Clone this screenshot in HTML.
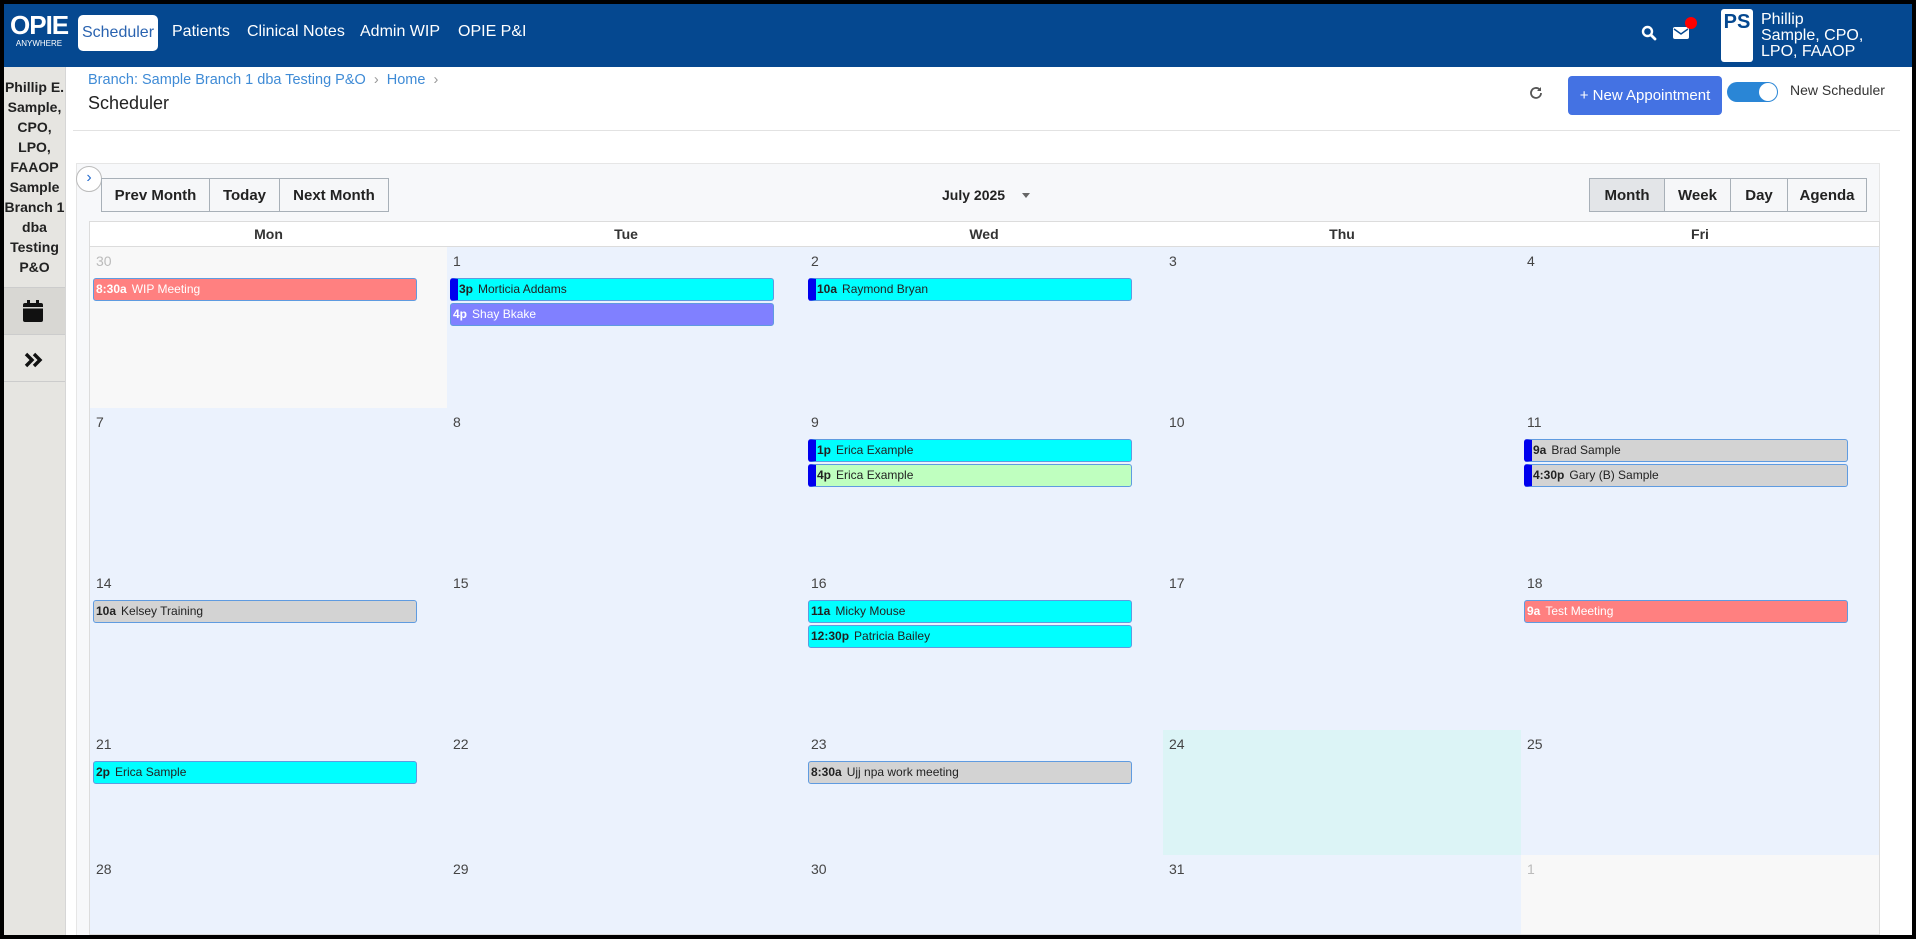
<!DOCTYPE html>
<html style="overflow:hidden;width:1916px;height:939px"><head><meta charset="utf-8"><style>
*{box-sizing:border-box;margin:0;padding:0}
body{width:1916px;height:939px;background:#000;font-family:"Liberation Sans",sans-serif;position:relative;overflow:hidden}
.a{position:absolute}
#nav{left:4px;top:4px;width:1908px;height:63px;background:#054890}
.nl{color:#fff;font-size:16px;top:19px}
#side{left:4px;top:67px;width:62px;height:868px;background:#e6e5e1;border-right:1px solid #d6d6d6}
#main{left:66px;top:67px;width:1846px;height:868px;background:#fff;overflow:hidden}
.btn{position:absolute;top:178px;height:34px;border:1px solid #a8b0b8;background:#f6f7f9;font-weight:bold;font-size:15px;color:#222;display:flex;align-items:center;justify-content:center}
.cell{position:absolute;border-right:1px solid #dcdcdc;border-bottom:1px solid #dcdcdc;background:#ebf2fd;overflow:hidden}
.dn{position:absolute;left:6px;top:6px;font-size:14px;color:#444}
.ev{position:absolute;left:3px;width:324px;height:23px;border:1px solid #5f9be0;border-radius:3px;font-size:12px;color:#222;line-height:21px;padding-left:2px;white-space:nowrap;overflow:hidden}
.ev b{margin-right:5px}
.bar{border-left:8px solid #0000ee;padding-left:1px}
.hd{position:absolute;top:222px;height:25px;text-align:center;font-weight:bold;font-size:14px;color:#333;line-height:25px;border-right:1px solid #dcdcdc;border-bottom:1px solid #dcdcdc;background:#fff}
</style></head><body>
<div id="nav" class="a">
 <div class="a" style="left:6px;top:6px;width:58px;text-align:center;color:#fff">
  <div style="font-size:26px;font-weight:bold;line-height:30px;letter-spacing:-1px">OPIE</div>
  <div style="font-size:8px;line-height:8px">ANYWHERE</div>
 </div>
 <div class="a" style="left:74px;top:11px;width:80px;height:36px;background:#fff;border-radius:5px;color:#2a63b0;font-size:16px;line-height:36px;text-align:center">Scheduler</div>
 <div class="a nl" style="left:168px">Patients</div>
 <div class="a nl" style="left:243px">Clinical Notes</div>
 <div class="a nl" style="left:356px">Admin WIP</div>
 <div class="a nl" style="left:454px">OPIE P&amp;I</div>
 <svg class="a" style="left:1637px;top:21px" width="16" height="16" viewBox="0 0 16 16"><circle cx="6.5" cy="6.5" r="4.5" stroke="#fff" stroke-width="2.4" fill="none"/><path d="M10 10l4 4" stroke="#fff" stroke-width="2.8" stroke-linecap="round"/></svg>
 <svg class="a" style="left:1669px;top:23px" width="16" height="12" viewBox="0 0 16 12"><rect width="16" height="12" rx="2" fill="#fff"/><path d="M1 2l7 5 7-5" stroke="#054890" stroke-width="1.5" fill="none"/></svg>
 <div class="a" style="left:1681px;top:13px;width:12px;height:12px;border-radius:50%;background:#f00"></div>
 <div class="a" style="left:1717px;top:5px;width:32px;height:53px;background:#fff;border-radius:3px;color:#054890;font-size:20px;font-weight:bold;text-align:center;line-height:26px">PS</div>
 <div class="a" style="left:1757px;top:8px;color:#fff;font-size:16px;line-height:16px">Phillip<br>Sample, CPO,<br>LPO, FAAOP</div>
</div>
<div id="side" class="a">
 <div style="padding-top:10px;text-align:center;font-weight:bold;font-size:14px;color:#222;line-height:20px">Phillip E.<br>Sample,<br>CPO,<br>LPO,<br>FAAOP<br>Sample<br>Branch 1<br>dba<br>Testing<br>P&amp;O</div>
 <div class="a" style="left:0;top:220px;width:61px;height:48px;background:#d8d7d3;border-top:1px solid #ccc;border-bottom:1px solid #ccc"></div>
 <svg class="a" style="left:19px;top:233px" width="20" height="22" viewBox="0 0 20 22"><rect x="4" y="0" width="3" height="5" fill="#111"/><rect x="13" y="0" width="3" height="5" fill="#111"/><rect x="0" y="3" width="20" height="19" rx="2" fill="#111"/><rect x="0" y="7" width="20" height="1.5" fill="#d8d7d3"/></svg>
 <svg class="a" style="left:19px;top:285px" width="20" height="16" viewBox="0 0 20 16"><path d="M3 2l6 6-6 6M11 2l6 6-6 6" stroke="#111" stroke-width="3.4" fill="none"/></svg>
 <div class="a" style="left:0;top:314px;width:61px;height:1px;background:#ccc"></div>
</div>
<div id="main" class="a">
 <div class="a" style="left:22px;top:5px;font-size:14.5px;color:#3f8bd6">Branch: Sample Branch 1 dba Testing P&amp;O &nbsp;<span style="color:#999">›</span>&nbsp; Home &nbsp;<span style="color:#999">›</span></div>
 <div class="a" style="left:22px;top:26px;font-size:18px;color:#222">Scheduler</div>
 <svg class="a" style="left:1462px;top:18px" width="16" height="16" viewBox="0 0 16 16"><path d="M13 8a5 5 0 1 1-1.5-3.6" stroke="#555" stroke-width="1.8" fill="none"/><path d="M13 2v4h-4z" fill="#555"/></svg>
 <div class="a" style="left:1502px;top:9px;width:154px;height:39px;background:#4472e3;border-radius:4px;color:#fff;font-size:15px;line-height:39px;text-align:center">+ New Appointment</div>
 <div class="a" style="left:1661px;top:15px;width:51px;height:20px;background:#2a86d6;border-radius:10px"><div class="a" style="right:1px;top:1px;width:18px;height:18px;border-radius:50%;background:#fff"></div></div>
 <div class="a" style="left:1724px;top:15px;font-size:14px;color:#333">New Scheduler</div>
 <div class="a" style="left:7px;top:63px;width:1827px;height:1px;background:#e2e2e2"></div>
 <div class="a" style="left:10px;top:96px;width:1804px;height:780px;background:#f7f8fa;border:1px solid #e6e6e6"></div>
</div>
<div class="a" style="left:76px;top:166px;width:26px;height:26px;border-radius:50%;background:#fff;border:1px solid #bbb;color:#2a6fd0;text-align:center;line-height:22px;font-size:16px">›</div>
<div class="a" style="left:942px;top:187px;font-size:14px;font-weight:bold;color:#222">July 2025</div>
<div class="a" style="left:1022px;top:193px;width:0;height:0;border:4px solid transparent;border-top:5px solid #666"></div>
<div class="btn" style="left:101px;width:109px">Prev Month</div>
<div class="btn" style="left:209px;width:71px">Today</div>
<div class="btn" style="left:279px;width:110px">Next Month</div>
<div class="btn" style="left:1589px;width:76px;background:#e3e5e8">Month</div>
<div class="btn" style="left:1664px;width:67px">Week</div>
<div class="btn" style="left:1730px;width:58px">Day</div>
<div class="btn" style="left:1787px;width:80px">Agenda</div>
<div class="a" style="left:89px;top:221px;width:1791px;height:714px;border-left:1px solid #dcdcdc;border-top:1px solid #dcdcdc"></div>
<div class="hd" style="left:90px;width:358px">Mon</div>
<div class="hd" style="left:447px;width:359px">Tue</div>
<div class="hd" style="left:805px;width:359px">Wed</div>
<div class="hd" style="left:1163px;width:359px">Thu</div>
<div class="hd" style="left:1521px;width:359px">Fri</div>

<div class="cell" style="left:90px;top:247px;width:358px;height:162px;background:#f8f8f8"><div class="dn" style="color:#bbb">30</div><div class="ev" style="top:31px;background:#ff8080;color:#fff"><b>8:30a</b>WIP Meeting</div></div>
<div class="cell" style="left:447px;top:247px;width:359px;height:162px"><div class="dn">1</div><div class="ev bar" style="top:31px;background:#0ff"><b>3p</b>Morticia Addams</div><div class="ev" style="top:56px;background:#8080ff;color:#fff"><b>4p</b>Shay Bkake</div></div>
<div class="cell" style="left:805px;top:247px;width:359px;height:162px"><div class="dn">2</div><div class="ev bar" style="top:31px;background:#0ff"><b>10a</b>Raymond Bryan</div></div>
<div class="cell" style="left:1163px;top:247px;width:359px;height:162px"><div class="dn">3</div></div>
<div class="cell" style="left:1521px;top:247px;width:359px;height:162px"><div class="dn">4</div></div>

<div class="cell" style="left:90px;top:408px;width:358px;height:162px"><div class="dn">7</div></div>
<div class="cell" style="left:447px;top:408px;width:359px;height:162px"><div class="dn">8</div></div>
<div class="cell" style="left:805px;top:408px;width:359px;height:162px"><div class="dn">9</div><div class="ev bar" style="top:31px;background:#0ff"><b>1p</b>Erica Example</div><div class="ev bar" style="top:56px;background:#bfffbf"><b>4p</b>Erica Example</div></div>
<div class="cell" style="left:1163px;top:408px;width:359px;height:162px"><div class="dn">10</div></div>
<div class="cell" style="left:1521px;top:408px;width:359px;height:162px"><div class="dn">11</div><div class="ev bar" style="top:31px;background:#d3d3d3"><b>9a</b>Brad Sample</div><div class="ev bar" style="top:56px;background:#d3d3d3"><b>4:30p</b>Gary (B) Sample</div></div>

<div class="cell" style="left:90px;top:569px;width:358px;height:162px"><div class="dn">14</div><div class="ev" style="top:31px;background:#d3d3d3"><b>10a</b>Kelsey Training</div></div>
<div class="cell" style="left:447px;top:569px;width:359px;height:162px"><div class="dn">15</div></div>
<div class="cell" style="left:805px;top:569px;width:359px;height:162px"><div class="dn">16</div><div class="ev" style="top:31px;background:#0ff"><b>11a</b>Micky Mouse</div><div class="ev" style="top:56px;background:#0ff"><b>12:30p</b>Patricia Bailey</div></div>
<div class="cell" style="left:1163px;top:569px;width:359px;height:162px"><div class="dn">17</div></div>
<div class="cell" style="left:1521px;top:569px;width:359px;height:162px"><div class="dn">18</div><div class="ev" style="top:31px;background:#ff8080;color:#fff"><b>9a</b>Test Meeting</div></div>

<div class="cell" style="left:90px;top:730px;width:358px;height:126px"><div class="dn">21</div><div class="ev" style="top:31px;background:#0ff"><b>2p</b>Erica Sample</div></div>
<div class="cell" style="left:447px;top:730px;width:359px;height:126px"><div class="dn">22</div></div>
<div class="cell" style="left:805px;top:730px;width:359px;height:126px"><div class="dn">23</div><div class="ev" style="top:31px;background:#d3d3d3"><b>8:30a</b>Ujj npa work meeting</div></div>
<div class="cell" style="left:1163px;top:730px;width:359px;height:126px;background:#dcf4f6"><div class="dn">24</div></div>
<div class="cell" style="left:1521px;top:730px;width:359px;height:126px"><div class="dn">25</div></div>

<div class="cell" style="left:90px;top:855px;width:358px;height:80px"><div class="dn">28</div></div>
<div class="cell" style="left:447px;top:855px;width:359px;height:80px"><div class="dn">29</div></div>
<div class="cell" style="left:805px;top:855px;width:359px;height:80px"><div class="dn">30</div></div>
<div class="cell" style="left:1163px;top:855px;width:359px;height:80px"><div class="dn">31</div></div>
<div class="cell" style="left:1521px;top:855px;width:359px;height:80px;background:#f8f8f8"><div class="dn" style="color:#bbb">1</div></div>
<div class="a" style="left:0;top:935px;width:1916px;height:4px;background:#000"></div>
<div class="a" style="left:1912px;top:0;width:4px;height:939px;background:#000"></div>
</body></html>
